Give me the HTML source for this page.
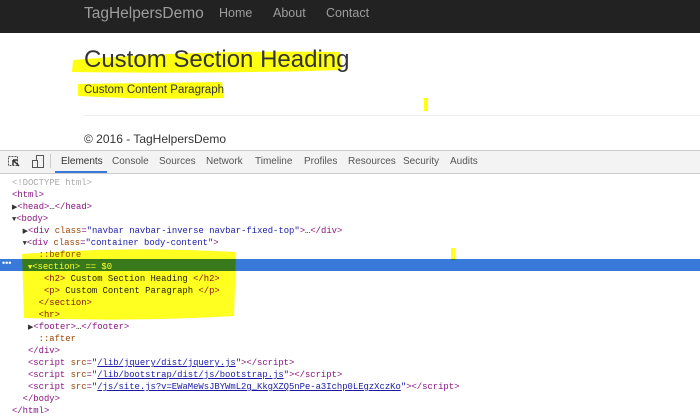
<!DOCTYPE html>
<html><head><style>
body{margin:0;width:700px;height:407px;overflow:hidden;background:#fff;position:relative;font-family:"Liberation Sans",sans-serif}
.a{position:absolute;white-space:nowrap}
.nav{position:absolute;left:0;top:0;width:700px;height:33px;background:#222;}
.nav span{position:absolute;top:6px;color:#9d9d9d;font-size:12.5px}
.code{font-family:"Liberation Mono",monospace;font-size:8.9px;color:#881280;line-height:12px}
.code div{height:12px;overflow:visible}
.at{color:#994500}.av{color:#1a1aa6}.g{color:#222}.cm{color:#aaa}
.tri{font-size:7px;color:#333;line-height:0}
.lnk{color:#1a1aa6;text-decoration:underline}
</style></head><body>
<div class="nav">
<span style="left:84px;top:5px;font-size:15.5px">TagHelpersDemo</span>
<span style="left:219px">Home</span>
<span style="left:273px">About</span>
<span style="left:326px">Contact</span>
</div>
<svg class="a" style="left:70px;top:48px" width="290" height="56"><path d="M3 12 Q120 2 270 4 L272 22 Q150 26 2 24Z" fill="#ffff10"/><path d="M8 36 L152 34 L154 50 Q80 52 8 48Z" fill="#ffff10"/></svg>
<div class="a" style="left:84px;top:46px;font-size:24px;color:#333">Custom Section Heading</div>
<div class="a" style="left:84px;top:84px;font-size:11.5px;color:#333">Custom Content Paragraph</div>
<div class="a" style="left:424px;top:98px;width:4px;height:13px;background:#ffff10"></div>
<div class="a" style="left:84px;top:115px;width:616px;height:1px;background:#eee"></div>
<div class="a" style="left:84px;top:132px;font-size:12px;color:#333">© 2016 - TagHelpersDemo</div>
<div class="a" style="left:0;top:150px;width:700px;height:22px;background:#f3f3f3;border-top:1px solid #ccc;border-bottom:1px solid #ccc"></div>
<svg class="a" style="left:8px;top:155px" width="40" height="14"><rect x="0.5" y="1.5" width="9" height="9" fill="none" stroke="#555" stroke-dasharray="2 1"/><path d="M5 5 L11 11 M5 5 L5 10 M5 5 L10 5" stroke="#333" stroke-width="1.5"/><rect x="28.5" y="0.5" width="7" height="12" fill="none" stroke="#555"/><rect x="24.5" y="5.5" width="5" height="7" fill="#f3f3f3" stroke="#555"/></svg>
<div class="a" style="left:50px;top:154px;width:1px;height:14px;background:#ccc"></div>
<div class="a" style="left:61px;top:156px;font-size:10px;color:#333">Elements</div>
<div class="a" style="left:55px;top:171px;width:52px;height:2px;background:#3879d9"></div>
<div class="a" style="left:112px;top:156px;font-size:10px;color:#555">Console</div>
<div class="a" style="left:159px;top:156px;font-size:10px;color:#555">Sources</div>
<div class="a" style="left:206px;top:156px;font-size:10px;color:#555">Network</div>
<div class="a" style="left:255px;top:156px;font-size:10px;color:#555">Timeline</div>
<div class="a" style="left:304px;top:156px;font-size:10px;color:#555">Profiles</div>
<div class="a" style="left:348px;top:156px;font-size:10px;color:#555">Resources</div>
<div class="a" style="left:403px;top:156px;font-size:10px;color:#555">Security</div>
<div class="a" style="left:450px;top:156px;font-size:10px;color:#555">Audits</div>
<div class="a" style="left:0;top:259px;width:700px;height:12px;background:#3879d9"></div>
<div class="a" style="left:2px;top:258px;color:#fff;font-size:9px">•••</div>
<div class="a code" style="left:12px;top:177px">
<div class="cm">&lt;!DOCTYPE html&gt;</div>
<div>&lt;html&gt;</div>
<div><span class="tri">▶</span>&lt;head&gt;<span class="g">…</span>&lt;/head&gt;</div>
<div><span class="tri">▼</span>&lt;body&gt;</div>
<div>&nbsp;&nbsp;<span class="tri">▶</span>&lt;div <span class="at">class</span>=<span class="av">"navbar navbar-inverse navbar-fixed-top"</span>&gt;<span class="g">…</span>&lt;/div&gt;</div>
<div>&nbsp;&nbsp;<span class="tri">▼</span>&lt;div <span class="at">class</span>=<span class="av">"container body-content"</span>&gt;</div>
<div class="at">&nbsp;&nbsp;&nbsp;&nbsp;&nbsp;::before</div>
<div style="color:#fff">&nbsp;&nbsp;&nbsp;<span class="tri" style="color:#fff">▼</span>&lt;section&gt; == $0</div>
<div>&nbsp;&nbsp;&nbsp;&nbsp;&nbsp;&nbsp;&lt;h2&gt;<span class="g"> Custom Section Heading </span>&lt;/h2&gt;</div>
<div>&nbsp;&nbsp;&nbsp;&nbsp;&nbsp;&nbsp;&lt;p&gt;<span class="g"> Custom Content Paragraph </span>&lt;/p&gt;</div>
<div>&nbsp;&nbsp;&nbsp;&nbsp;&nbsp;&lt;/section&gt;</div>
<div>&nbsp;&nbsp;&nbsp;&nbsp;&nbsp;&lt;hr&gt;</div>
<div>&nbsp;&nbsp;&nbsp;<span class="tri">▶</span>&lt;footer&gt;<span class="g">…</span>&lt;/footer&gt;</div>
<div class="at">&nbsp;&nbsp;&nbsp;&nbsp;&nbsp;::after</div>
<div>&nbsp;&nbsp;&nbsp;&lt;/div&gt;</div>
<div>&nbsp;&nbsp;&nbsp;&lt;script <span class="at">src</span>=<span class="av">"<span class="lnk">/lib/jquery/dist/jquery.js</span>"</span>&gt;&lt;/script&gt;</div>
<div>&nbsp;&nbsp;&nbsp;&lt;script <span class="at">src</span>=<span class="av">"<span class="lnk">/lib/bootstrap/dist/js/bootstrap.js</span>"</span>&gt;&lt;/script&gt;</div>
<div>&nbsp;&nbsp;&nbsp;&lt;script <span class="at">src</span>=<span class="av">"<span class="lnk">/js/site.js?v=EWaMeWsJBYWmL2g_KkgXZQ5nPe-a3Ichp0LEgzXczKo</span>"</span>&gt;&lt;/script&gt;</div>
<div>&nbsp;&nbsp;&lt;/body&gt;</div>
<div>&lt;/html&gt;</div>
</div>
<svg class="a" style="left:0;top:0;mix-blend-mode:multiply" width="700" height="407"><path d="M22 254 Q120 246 236 252 L234 316 Q130 322 24 318Z" fill="#ffff20"/><rect x="451" y="248" width="4" height="12" fill="#ffff20"/></svg>
</body></html>
